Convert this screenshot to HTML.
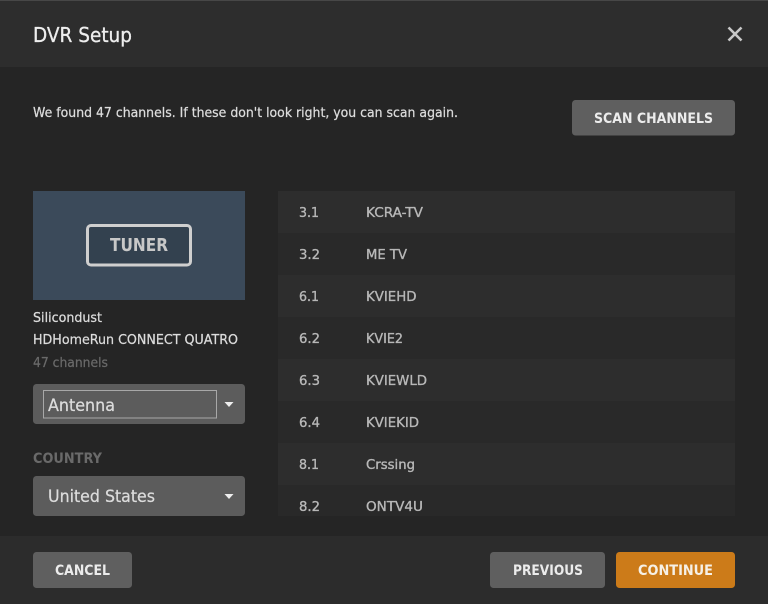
<!DOCTYPE html>
<html><head><meta charset="utf-8"><title>DVR Setup</title>
<style>
html,body{margin:0;padding:0;width:768px;height:604px;overflow:hidden;background:#252525}
svg{display:block;filter:blur(.35px)}
text{font-family:"DejaVu Sans",sans-serif;font-size:13.5px;fill:#dcdcdc;stroke:#dcdcdc;stroke-width:.25px}
.b{font-weight:700;font-size:13.8px;fill:#ececec;stroke:none}
.r{fill:#b8b8b8;stroke:#b8b8b8;font-size:13.5px;stroke-width:.35px}
.m{fill:#6a6a6a;stroke:#6a6a6a}
</style></head><body>
<svg width="768" height="604" viewBox="0 0 768 604" xmlns="http://www.w3.org/2000/svg">
<rect width="768" height="604" fill="#252525"/>
<rect width="768" height="67" fill="#2d2d2d"/>
<rect width="768" height="1" fill="#474747"/>
<rect y="536" width="768" height="68" fill="#2c2c2c"/>
<text x="33" y="42" style="font-size:20.500px;fill:#eee;stroke:#eee;stroke-width:.3px" textLength="99" lengthAdjust="spacingAndGlyphs">DVR Setup</text>
<path d="M728.500 27.500L741.500 40.500M741.500 27.500L728.500 40.500" stroke="#c8c8c8" stroke-width="2.600" fill="none"/>
<text x="33" y="117" textLength="425" lengthAdjust="spacingAndGlyphs">We found 47 channels. If these don't look right, you can scan again.</text>
<rect x="572" y="100" width="163" height="35.500" rx="3.500" fill="#5f5f5f"/>
<text class="b" x="594" y="123" textLength="119" lengthAdjust="spacingAndGlyphs">SCAN CHANNELS</text>

<rect x="33" y="191" width="212" height="109" fill="#3b4a5a"/>
<rect x="87.500" y="225.500" width="103" height="39.500" rx="3.500" fill="#33414f" stroke="#cfcfcf" stroke-width="3"/>
<text class="b" x="110" y="251" style="font-size:17.500px;fill:#c8c8c8" textLength="58" lengthAdjust="spacingAndGlyphs">TUNER</text>
<text x="33" y="322" textLength="69" lengthAdjust="spacingAndGlyphs">Silicondust</text>
<text x="33" y="344" textLength="205" lengthAdjust="spacingAndGlyphs">HDHomeRun CONNECT QUATRO</text>
<text class="m" x="33" y="367" textLength="75" lengthAdjust="spacingAndGlyphs">47 channels</text>

<rect x="33" y="384" width="212" height="40" rx="3.500" fill="#5c5c5c"/>
<rect x="43.500" y="390.500" width="173" height="27.500" fill="none" stroke="#a8a8a8" stroke-width="1"/>
<text x="48" y="411" style="font-size:16.500px" textLength="67" lengthAdjust="spacingAndGlyphs">Antenna</text>
<path d="M224.500 402h9l-4.500 5z" fill="#eee"/>
<text class="b" x="33" y="463" textLength="69" lengthAdjust="spacingAndGlyphs" style="fill:#6a6a6a">COUNTRY</text>
<rect x="33" y="476" width="212" height="40" rx="3.500" fill="#5c5c5c"/>
<text x="48" y="502" style="font-size:16.500px" textLength="107" lengthAdjust="spacingAndGlyphs">United States</text>
<path d="M224.500 494h9l-4.500 5z" fill="#eee"/>

<rect x="278" y="191" width="457" height="325" fill="#292929"/>
<rect x="278" y="191" width="457" height="42" fill="#2d2d2d"/>
<rect x="278" y="275" width="457" height="42" fill="#2d2d2d"/>
<rect x="278" y="359" width="457" height="42" fill="#2d2d2d"/>
<rect x="278" y="443" width="457" height="42" fill="#2d2d2d"/>
<text class="r" x="299" y="217" textLength="20" lengthAdjust="spacingAndGlyphs">3.1</text><text class="r" x="366" y="217" textLength="57" lengthAdjust="spacingAndGlyphs">KCRA-TV</text>
<text class="r" x="299" y="259" textLength="21" lengthAdjust="spacingAndGlyphs">3.2</text><text class="r" x="366" y="259" textLength="41" lengthAdjust="spacingAndGlyphs">ME TV</text>
<text class="r" x="299" y="301" textLength="20" lengthAdjust="spacingAndGlyphs">6.1</text><text class="r" x="366" y="301" textLength="50.500" lengthAdjust="spacingAndGlyphs">KVIEHD</text>
<text class="r" x="299" y="343" textLength="21" lengthAdjust="spacingAndGlyphs">6.2</text><text class="r" x="366" y="343" textLength="37" lengthAdjust="spacingAndGlyphs">KVIE2</text>
<text class="r" x="299" y="385" textLength="21" lengthAdjust="spacingAndGlyphs">6.3</text><text class="r" x="366" y="385" textLength="61" lengthAdjust="spacingAndGlyphs">KVIEWLD</text>
<text class="r" x="299" y="427" textLength="21" lengthAdjust="spacingAndGlyphs">6.4</text><text class="r" x="366" y="427" textLength="53" lengthAdjust="spacingAndGlyphs">KVIEKID</text>
<text class="r" x="299" y="469" textLength="20" lengthAdjust="spacingAndGlyphs">8.1</text><text class="r" x="366" y="469" textLength="49" lengthAdjust="spacingAndGlyphs">Crssing</text>
<text class="r" x="299" y="511" textLength="21" lengthAdjust="spacingAndGlyphs">8.2</text><text class="r" x="366" y="511" textLength="57" lengthAdjust="spacingAndGlyphs">ONTV4U</text>

<rect x="33" y="552" width="99" height="36" rx="3.500" fill="#5f5f5f"/>
<text class="b" x="55" y="575" textLength="55" lengthAdjust="spacingAndGlyphs">CANCEL</text>
<rect x="490" y="552" width="115" height="36" rx="3.500" fill="#5f5f5f"/>
<text class="b" x="513" y="575" textLength="70" lengthAdjust="spacingAndGlyphs">PREVIOUS</text>
<rect x="616" y="552" width="119" height="36" rx="3.500" fill="#cc7b19"/>
<text class="b" x="638" y="575" style="fill:#f6f0e6" textLength="75" lengthAdjust="spacingAndGlyphs">CONTINUE</text>
</svg>
</body></html>
